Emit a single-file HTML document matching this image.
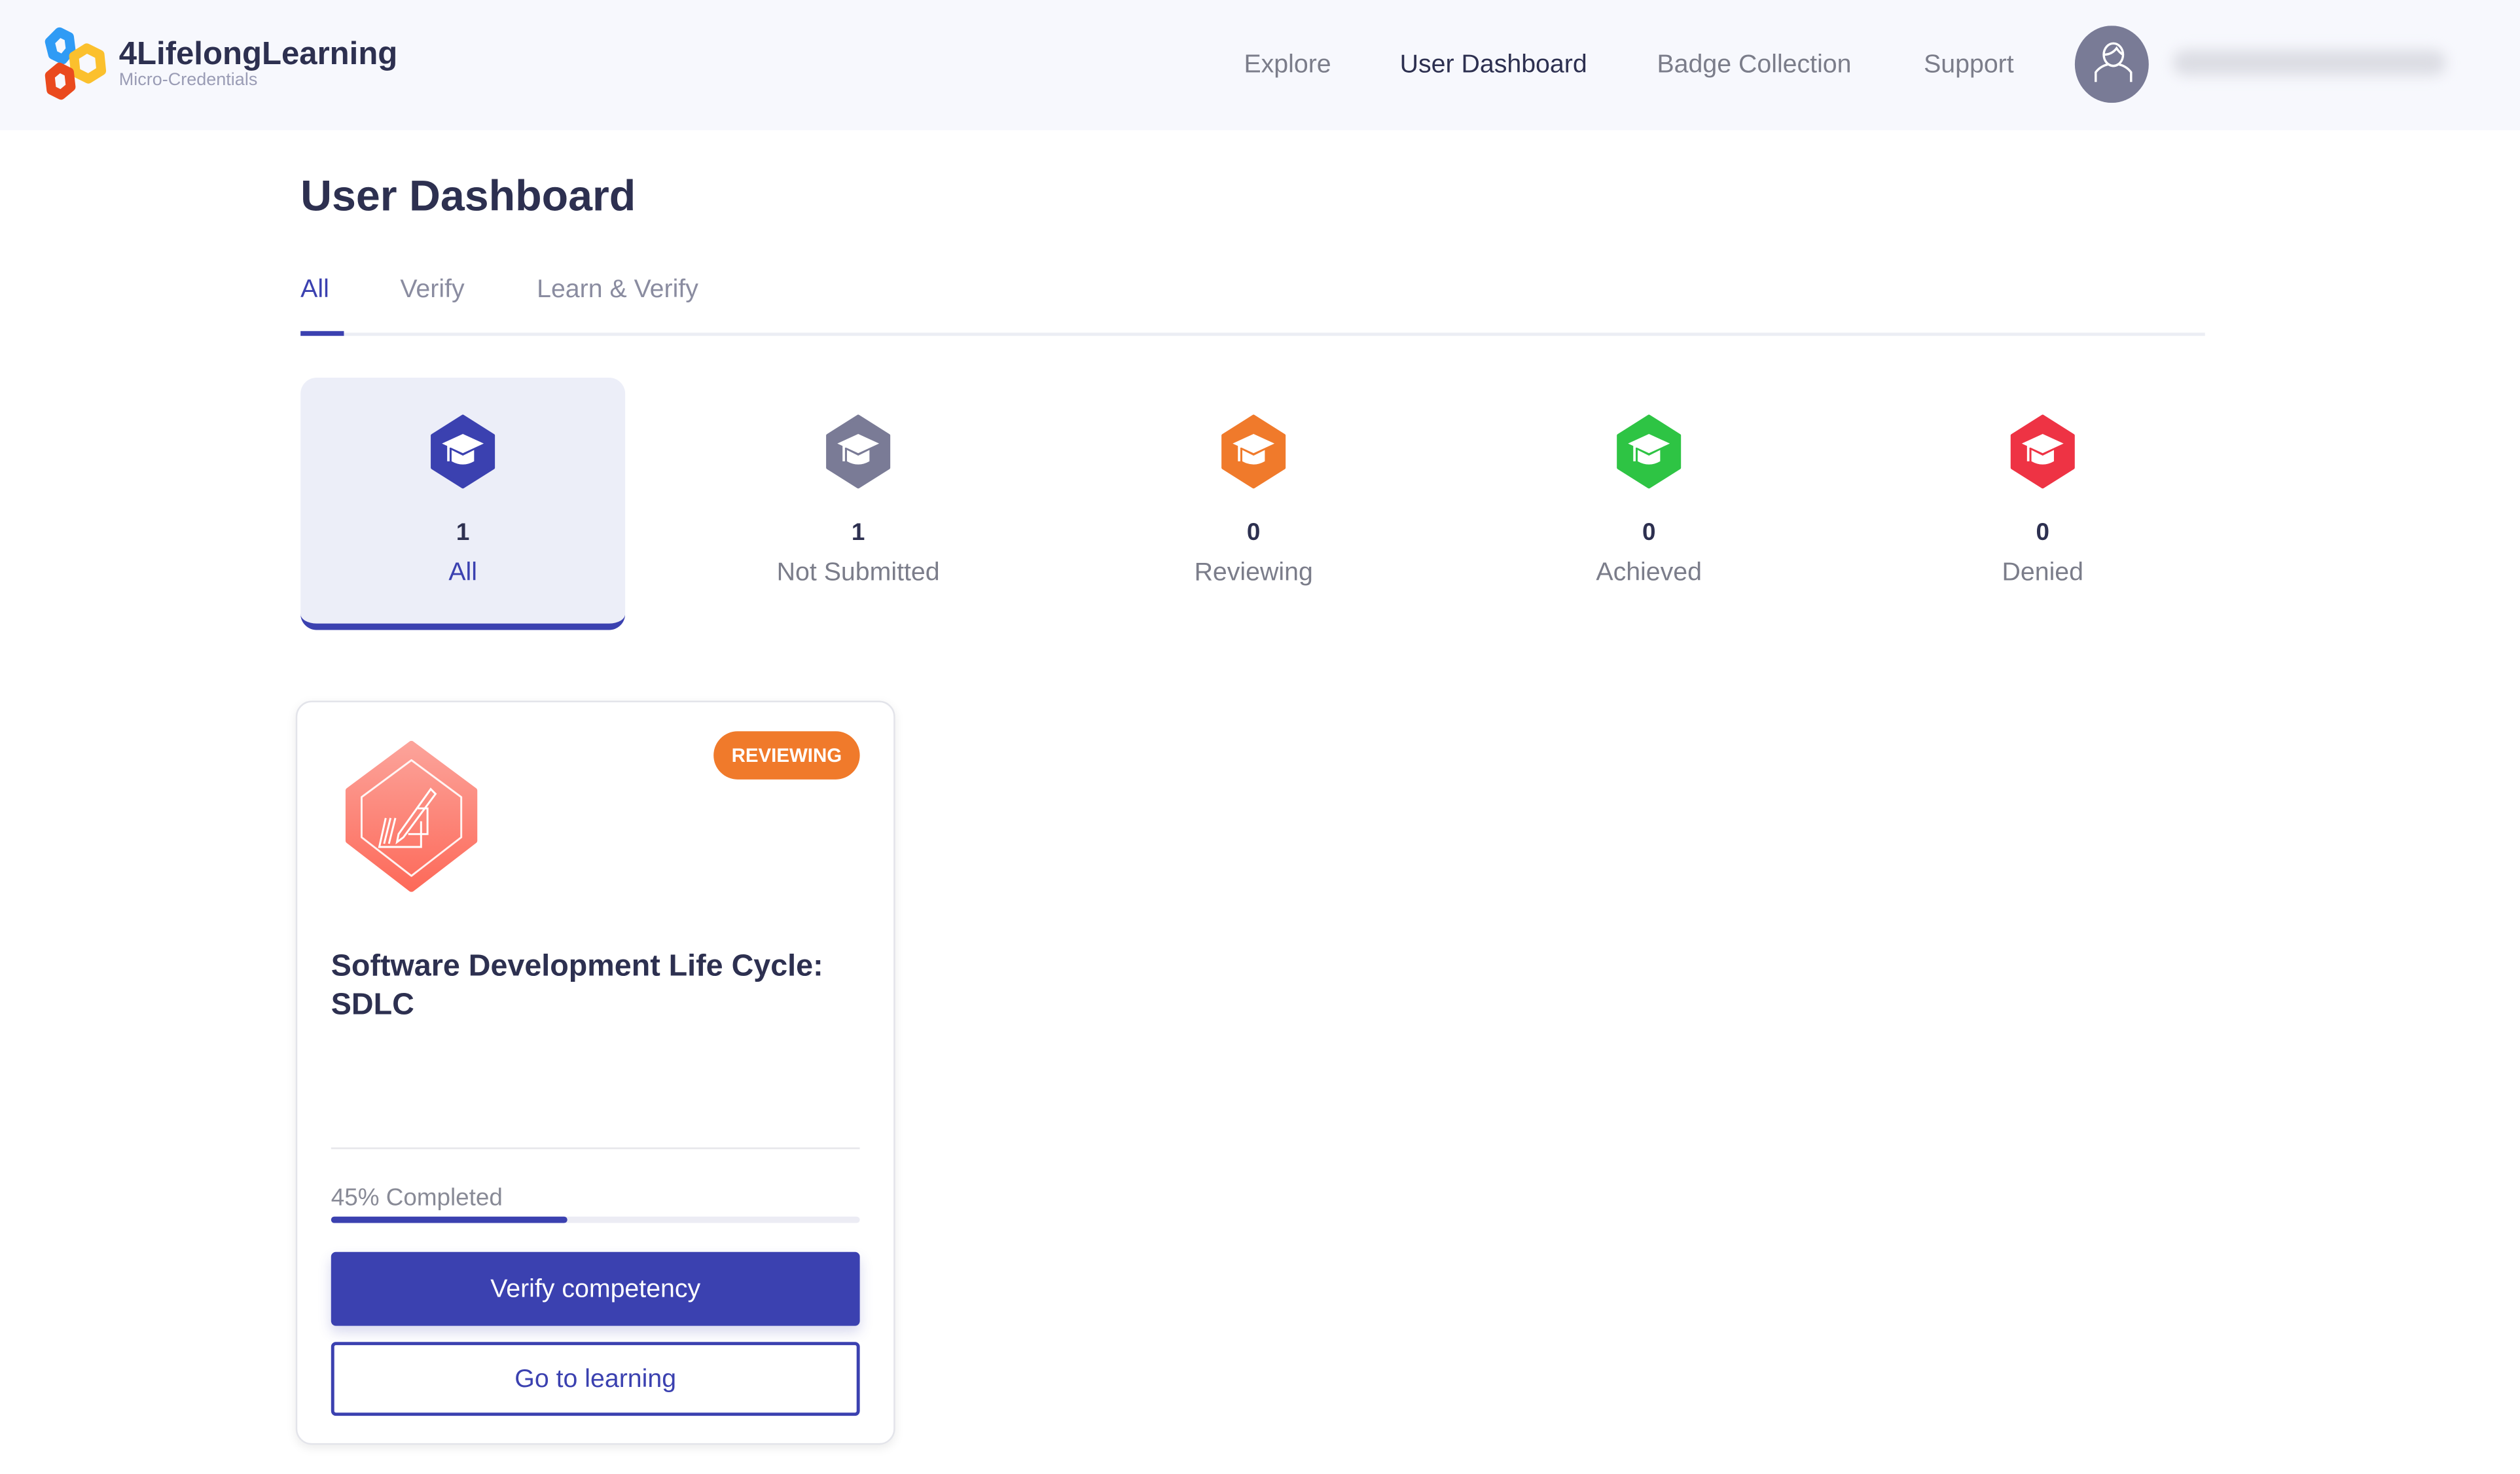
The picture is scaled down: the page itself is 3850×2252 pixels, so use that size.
<!DOCTYPE html>
<html><head><meta charset="utf-8"><style>
html,body{margin:0;padding:0;background:#fff;overflow:hidden;width:3850px;height:2250px}
#w{position:absolute;left:0;top:0;width:1568px;height:917px;transform:scale(2.45536);transform-origin:0 0;font-family:"Liberation Sans",sans-serif;color:#2d3050}
.a{position:absolute;white-space:nowrap}
.hdr{position:absolute;left:0;top:0;width:1568px;height:81px;background:#f7f8fd}
.nav{font-size:16px;color:#7b7d8a;top:32px}
.stat{position:absolute;top:235px;width:202px;height:157px;text-align:center}
.stat svg{position:absolute;left:81px;top:23px}
.num{position:absolute;left:0;width:202px;top:88px;font-weight:bold;font-size:15px;color:#2d3050}
.lbl{position:absolute;left:0;width:202px;top:113px;font-size:16px;color:#7b7d8a}
</style></head><body><div id="w">
<div class="hdr"></div>
<svg class="a" style="left:26px;top:17px" width="44" height="46" viewBox="0 0 44 46">
<path d="M11 3 L17 6 L18 14 L13 20 L7 17 L5 9 Z" fill="none" stroke="#2f9bf5" stroke-width="6" stroke-linejoin="round"/>
<path d="M28 13 L36 17 L37 27 L29 32 L21 28 L20 18 Z" fill="none" stroke="#fbc02d" stroke-width="6" stroke-linejoin="round"/>
<path d="M11 25 L17 28 L18 37 L12 42 L6 39 L5 30 Z" fill="none" stroke="#ea4a1e" stroke-width="6" stroke-linejoin="round"/>
</svg>
<div class="a" style="left:74px;top:23px;font-size:20px;font-weight:bold;color:#2d3050">4LifelongLearning</div>
<div class="a" style="left:74px;top:44px;font-size:11px;color:#9a9cb5">Micro-Credentials</div>
<div class="a nav" style="left:774px">Explore</div>
<div class="a nav" style="left:871px;color:#2d3050">User Dashboard</div>
<div class="a nav" style="left:1031px">Badge Collection</div>
<div class="a nav" style="left:1197px">Support</div>
<svg class="a" style="left:1290px;top:16px" width="48" height="48" viewBox="0 0 48 48"><ellipse cx="24" cy="24" rx="23" ry="24" fill="#797b96"/><g fill="none" stroke="#fff" stroke-width="1.4"><ellipse cx="25" cy="18" rx="6" ry="7"/><path d="M19 18 q5 0 8-4 q2 3 4 4"/><path d="M14 35 v-6 q3-4 8-5 q3 2 6 0 q5 1 8 5 v6"/></g></svg>
<div class="a" style="left:1352px;top:31px;width:170px;height:16px;background:#dcdde4;border-radius:8px;filter:blur(4px)"></div>
<div class="a" style="left:187px;top:107px;font-size:27px;font-weight:bold">User Dashboard</div>
<div class="a" style="left:187px;top:172px;font-size:16px;color:#3b41b0">All</div>
<div class="a" style="left:249px;top:172px;font-size:16px;color:#8a8ca0">Verify</div>
<div class="a" style="left:334px;top:172px;font-size:16px;color:#8a8ca0">Learn &amp; Verify</div>
<div class="a" style="left:187px;top:207px;width:1185px;height:2px;background:#eceef4"></div>
<div class="a" style="left:187px;top:206px;width:27px;height:3px;background:#3b41b0"></div>

<div class="stat" style="left:187px;background:#eceef8;border-radius:10px;box-sizing:border-box;border-bottom:4px solid #3b41b0"></div>
<div class="stat" style="left:187px"><svg width="40" height="46" viewBox="0 0 40 46"><path d="M20 1 L39 13 L39 33 L20 45 L1 33 L1 13 Z" fill="#3b41b0" stroke="#3b41b0" stroke-width="2" stroke-linejoin="round"/><g fill="#fff"><path d="M7 18 L20 12 L33 18 L20 24 Z"/><path d="M13 22 v7 q7 4 14 0 v-7 l-7 3.5 z"/></g><path d="M20 18 L11 20 V29" stroke="#fff" stroke-width="1.5" fill="none"/></svg><div class="num">1</div><div class="lbl" style="color:#3b41b0">All</div></div>
<div class="stat" style="left:433px"><svg width="40" height="46" viewBox="0 0 40 46"><path d="M20 1 L39 13 L39 33 L20 45 L1 33 L1 13 Z" fill="#7a7b96" stroke="#7a7b96" stroke-width="2" stroke-linejoin="round"/><g fill="#fff"><path d="M7 18 L20 12 L33 18 L20 24 Z"/><path d="M13 22 v7 q7 4 14 0 v-7 l-7 3.5 z"/></g><path d="M20 18 L11 20 V29" stroke="#fff" stroke-width="1.5" fill="none"/></svg><div class="num">1</div><div class="lbl">Not Submitted</div></div>
<div class="stat" style="left:679px"><svg width="40" height="46" viewBox="0 0 40 46"><path d="M20 1 L39 13 L39 33 L20 45 L1 33 L1 13 Z" fill="#f07a2b" stroke="#f07a2b" stroke-width="2" stroke-linejoin="round"/><g fill="#fff"><path d="M7 18 L20 12 L33 18 L20 24 Z"/><path d="M13 22 v7 q7 4 14 0 v-7 l-7 3.5 z"/></g><path d="M20 18 L11 20 V29" stroke="#fff" stroke-width="1.5" fill="none"/></svg><div class="num">0</div><div class="lbl">Reviewing</div></div>
<div class="stat" style="left:925px"><svg width="40" height="46" viewBox="0 0 40 46"><path d="M20 1 L39 13 L39 33 L20 45 L1 33 L1 13 Z" fill="#2ec444" stroke="#2ec444" stroke-width="2" stroke-linejoin="round"/><g fill="#fff"><path d="M7 18 L20 12 L33 18 L20 24 Z"/><path d="M13 22 v7 q7 4 14 0 v-7 l-7 3.5 z"/></g><path d="M20 18 L11 20 V29" stroke="#fff" stroke-width="1.5" fill="none"/></svg><div class="num">0</div><div class="lbl">Achieved</div></div>
<div class="stat" style="left:1170px"><svg width="40" height="46" viewBox="0 0 40 46"><path d="M20 1 L39 13 L39 33 L20 45 L1 33 L1 13 Z" fill="#ee3344" stroke="#ee3344" stroke-width="2" stroke-linejoin="round"/><g fill="#fff"><path d="M7 18 L20 12 L33 18 L20 24 Z"/><path d="M13 22 v7 q7 4 14 0 v-7 l-7 3.5 z"/></g><path d="M20 18 L11 20 V29" stroke="#fff" stroke-width="1.5" fill="none"/></svg><div class="num">0</div><div class="lbl">Denied</div></div>

<div class="a" style="left:184px;top:436px;width:371px;height:461px;border:1px solid #e3e4ea;border-radius:10px;background:#fff;box-shadow:0 2px 6px rgba(0,0,0,0.08)"></div>
<svg class="a" style="left:214px;top:461px" width="84" height="94" viewBox="0 0 84 94"><defs><linearGradient id="g" x1="0" y1="0" x2="0" y2="1"><stop offset="0" stop-color="#fca39a"/><stop offset="1" stop-color="#fd6a5a"/></linearGradient></defs><path d="M42 2 L81 31 L81 62 L42 92 L3 62 L3 31 Z" fill="url(#g)" stroke="url(#g)" stroke-width="4" stroke-linejoin="round"/><path d="M42 12 L73 35 L73 60 L42 84 L11 60 L11 35 Z" fill="none" stroke="#fff" stroke-width="1.2" stroke-linejoin="round" opacity=".9"/><g fill="none" stroke="#fff" stroke-width="1.2"><path d="M26 48 L22 66 H48 V50"/><path d="M29 48 L25 64 M32 48 L28 64"/><path d="M54 30 L34 58 L33 63 L37 60 L57 33 Z"/><path d="M46 42 H52 V58 H40"/></g></svg>
<div class="a" style="left:444px;top:455px;width:91px;height:30px;border-radius:15px;background:#f07a2b;color:#fff;font-size:12px;font-weight:bold;text-align:center;line-height:30px">REVIEWING</div>
<div class="a" style="left:206px;top:590px;font-size:19px;font-weight:bold;line-height:24px;white-space:normal;width:330px">Software Development Life Cycle: SDLC</div>
<div class="a" style="left:206px;top:714px;width:329px;height:1px;background:#e6e6ea"></div>
<div class="a" style="left:206px;top:737px;font-size:15px;color:#888a96">45% Completed</div>
<div class="a" style="left:206px;top:757px;width:329px;height:4px;border-radius:2px;background:#ececf4"></div>
<div class="a" style="left:206px;top:757px;width:147px;height:4px;border-radius:2px;background:#3b41b0"></div>
<div class="a" style="left:206px;top:779px;width:329px;height:46px;border-radius:3px;background:#3b41b0;color:#fff;font-size:16px;text-align:center;line-height:48px;box-shadow:0 4px 8px rgba(59,65,176,0.2)">Verify competency</div>
<div class="a" style="left:206px;top:835px;width:329px;height:46px;box-sizing:border-box;border:2px solid #3b41b0;border-radius:3px;color:#3b41b0;font-size:16px;text-align:center;line-height:44px">Go to learning</div>
</div></body></html>
